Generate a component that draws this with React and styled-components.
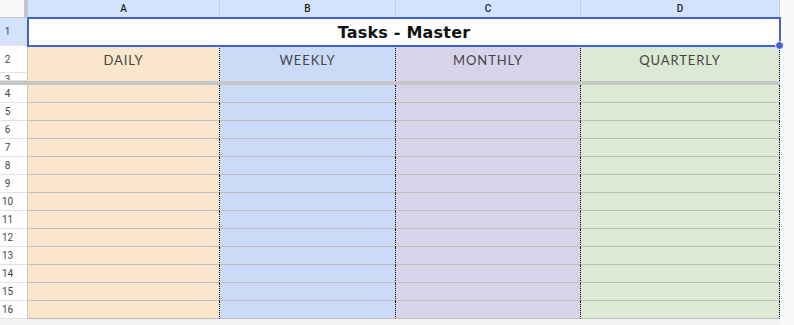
import React from "react";
import styled, { createGlobalStyle, css } from "styled-components";

const GlobalStyle = createGlobalStyle`
    html, body {
        margin: 0;
        padding: 0;
        background: #f8f9fa;
    }
    body {
        font-family: Roboto, "Liberation Sans", Arial, sans-serif;
    }
`;

const Sheet = styled.div`
    display: grid;
    grid-template-columns: 28px 192px 176px 185px 199px 1fr;
    grid-template-rows: 18px 28px 27px 8px 4px repeat(13, 18px) 1fr;
    width: 794px;
    height: 325px;
    background: #fff;
    overflow: hidden;
`;

const Corner = styled.div`
    box-sizing: border-box;
    background: #f8f9fa;
    border-right: 4px solid #c4c7c5;
    border-bottom: 1px solid #c4c7c5;
`;

const ColHeader = styled.div`
    box-sizing: border-box;
    display: flex;
    align-items: center;
    justify-content: center;
    background: #d3e3fd;
    border-right: 1px solid #c2cce0;
    border-bottom: 1px solid #c4c7c5;
    color: #1f1f1f;
    font-size: 10px;
    font-weight: 500;
`;

const RowHeader = styled.div`
    box-sizing: border-box;
    display: flex;
    align-items: center;
    justify-content: center;
    padding-right: 12px;
    background: ${(p) => (p.$selected ? "#d3e3fd" : "#fff")};
    border-right: 1px solid #c4c7c5;
    border-bottom: 1px solid #e1e3e1;
    color: #444746;
    font-size: 10px;
    overflow: hidden;
    ${(p) =>
        p.$clip &&
        css`
            align-items: flex-start;
            padding-top: 1px;
        `}
`;

const TitleCell = styled.div`
    position: relative;
    grid-column: span 4;
    display: flex;
    align-items: center;
    justify-content: center;
    background: #fff;
    outline: 2px solid #3f63d3;
    outline-offset: -1px;
    color: #111;
    font-family: "DejaVu Sans", "Open Sans", sans-serif;
    font-size: 16px;
    font-weight: 700;
    letter-spacing: 0.2px;
    z-index: 1;
`;

const Handle = styled.span`
    position: absolute;
    right: -4px;
    bottom: -4px;
    width: 7px;
    height: 7px;
    border-radius: 50%;
    background: #3f63d3;
    border: 1px solid #fff;
`;

const CategoryCell = styled.div`
    box-sizing: border-box;
    grid-row: span 2;
    display: flex;
    justify-content: center;
    padding-top: 6px;
    background: ${(p) => p.$bg};
    border-right: 1px dotted #000;
    color: #454545;
    font-family: Lato, "Open Sans", sans-serif;
    font-size: 13px;
    letter-spacing: 0.9px;
`;

const FreezeBar = styled.div`
    grid-column: 1 / 6;
    background: #c4c7c5;
`;

const DataCell = styled.div`
    box-sizing: border-box;
    background: ${(p) => p.$bg};
    border-right: 1px dotted #000;
    border-bottom: 1px solid #bdbdbd;
`;

const SideFill = styled.div`
    grid-column: 6;
    grid-row: 1 / -1;
    background: #f8f9fa;
`;

const BottomFill = styled.div`
    grid-column: 1 / 6;
    background: #f1f3f4;
`;

const columns = [
    { letter: "A", label: "DAILY", bg: "#f9e6cd" },
    { letter: "B", label: "WEEKLY", bg: "#cbdaf7" },
    { letter: "C", label: "MONTHLY", bg: "#d9d3e9" },
    { letter: "D", label: "QUARTERLY", bg: "#dce9d4" },
];

const dataRows = Array.from({ length: 13 }, (_, i) => i + 4);

export default function App() {
    return (
        <>
            <GlobalStyle />
            <Sheet>
                <SideFill />
                <Corner />
                {columns.map((c) => (
                    <ColHeader key={c.letter}>{c.letter}</ColHeader>
                ))}

                <RowHeader $selected>1</RowHeader>
                <TitleCell>
                    Tasks - Master
                    <Handle />
                </TitleCell>

                <RowHeader>2</RowHeader>
                {columns.map((c) => (
                    <CategoryCell key={c.label} $bg={c.bg}>
                        {c.label}
                    </CategoryCell>
                ))}
                <RowHeader $clip>3</RowHeader>

                <FreezeBar />

                {dataRows.map((n) => (
                    <React.Fragment key={n}>
                        <RowHeader>{n}</RowHeader>
                        {columns.map((c) => (
                            <DataCell key={c.letter} $bg={c.bg} />
                        ))}
                    </React.Fragment>
                ))}
                <BottomFill />
            </Sheet>
        </>
    );
}
